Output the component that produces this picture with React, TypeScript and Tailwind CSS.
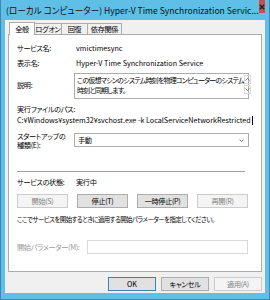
const btn =
  'h-[14px] flex items-center justify-center border border-[#adadad] bg-[#e1e1e1] text-black'
const btnOff =
  'h-[14px] flex items-center justify-center border border-[#cccccc] bg-[#f4f4f4] text-[#838383]'
const tab = 'h-[12px] bg-[#f0f0f0] border border-l-0 border-[#acacac] flex items-center justify-center'

function Chevron({ up }: { up?: boolean }) {
  return (
    <svg width="5" height="3" viewBox="0 0 5 3" className="block">
      <path d={up ? 'M0.5 2.5 L2.5 0.5 L4.5 2.5' : 'M0.5 0.5 L2.5 2.5 L4.5 0.5'} fill="none" stroke="#606060" strokeWidth="0.8" />
    </svg>
  )
}

export default function App() {
  return (
    <div className="w-[270px] h-[300px] bg-[#5fbfe7] border-x border-b border-[#3a88b4] flex flex-col font-['Noto_Sans_CJK_JP',sans-serif] [font-feature-settings:'palt'] text-black text-[7.2px] leading-[10px] tracking-[-0.35px]">
      {/* title bar */}
      <div className="h-[20px] flex items-start">
        <div className="pl-[5px] pt-[4px] text-[8.6px] leading-[12px] tracking-normal text-[#111] whitespace-nowrap">
          (ローカル コンピューター) Hyper-V Time Synchronization Servic...
        </div>
        <div className="ml-auto mr-[4px] w-[16px] h-[13px] bg-[#c7504c] flex items-center justify-center">
          <svg width="6" height="6" viewBox="0 0 6 6">
            <path d="M0.8 0.8 L5.2 5.2 M5.2 0.8 L0.8 5.2" stroke="#2a1a1a" strokeWidth="1.3" />
          </svg>
        </div>
      </div>

      {/* client */}
      <div className="mx-[4px] h-[273px] bg-[#f0f0f0] flex flex-col px-[3px] pt-[2px]">
        {/* tabs */}
        <div className="flex items-end h-[13px] ml-[1px] relative z-10">
          <div className="w-[26px] h-[13px] bg-white border border-b-0 border-[#acacac] flex items-center justify-center pb-[1px]">
            全般
          </div>
          <div className={`w-[27px] ${tab}`}>ログオン</div>
          <div className={`w-[26px] ${tab}`}>回復</div>
          <div className={`w-[34px] ${tab}`}>依存関係</div>
        </div>

        {/* panel */}
        <div className="-mt-px h-[238px] bg-white border border-[#acacac] flex flex-col pl-[8px]">
          <div className="mt-[7px] h-[12px] flex items-center">
            <span className="w-[59px]">サービス名:</span>
            <span className="tracking-normal">vmictimesync</span>
          </div>
          <div className="mt-[3px] h-[12px] flex items-center">
            <span className="w-[59px]">表示名:</span>
            <span className="tracking-normal">Hyper-V Time Synchronization Service</span>
          </div>
          <div className="mt-[4px] h-[26px] flex">
            <span className="w-[57px] pt-[7px]">説明:</span>
            <div className="w-[175px] h-[26px] border border-[#abadb3] flex">
              <div className="flex-1 pl-[2px] pt-[2px] leading-[9.5px] whitespace-nowrap text-[7px] tracking-[-0.8px]">
                この仮想マシンのシステム時刻を物理コンピューターのシステム
                <br />
                時刻と同期します。
              </div>
              <div className="w-[10px] flex flex-col gap-[1px] pt-[1px] pr-[1px]">
                <div className="h-[9px] border border-[#d9d9d9] flex items-center justify-center">
                  <Chevron up />
                </div>
                <div className="h-[9px] border border-[#d9d9d9] flex items-center justify-center">
                  <Chevron />
                </div>
              </div>
            </div>
          </div>
          <div className="mt-[5px] h-[10px] flex items-center">実行ファイルのパス:</div>
          <div className="mt-[1px] h-[10px] flex items-center whitespace-nowrap tracking-normal">
            C:¥Windows¥system32¥svchost.exe -k LocalServiceNetworkRestricted
            <span className="w-px h-[9px] bg-black ml-[1px]" />
          </div>
          <div className="mt-[8px] h-[18px] flex">
            <div className="w-[57px] leading-[9px] -mt-[1px] whitespace-nowrap">
              スタートアップの
              <br />
              種類(E):
            </div>
            <div className="w-[175px] h-[14px] border border-[#acacac] bg-white flex items-center pl-[3px] pr-[4px]">
              <span className="flex-1">手動</span>
              <Chevron />
            </div>
          </div>
          <div className="mt-[20px] w-[228px] h-px bg-[#a0a0a0]" />
          <div className="mt-[5px] h-[10px] flex items-center">
            <span className="w-[59px]">サービスの状態:</span>
            <span>実行中</span>
          </div>
          <div className="mt-[7px] w-[231px] grid grid-cols-4 gap-x-[9px]">
            <div className={btnOff}>開始(S)</div>
            <div className={btn}>停止(T)</div>
            <div className={btn}>一時停止(P)</div>
            <div className={btnOff}>再開(R)</div>
          </div>
          <div className="mt-[7px] h-[10px] flex items-center whitespace-nowrap text-[6.4px] tracking-[-0.5px]">
            ここでサービスを開始するときに適用する開始パラメーターを指定してください。
          </div>
          <div className="mt-[15px] h-[14px] flex items-center">
            <span className="w-[70px] text-[#9a9a9a] whitespace-nowrap">開始パラメーター(M):</span>
            <div className="w-[161px] h-[14px] border border-[#d9d9d9] bg-white" />
          </div>
        </div>

        {/* dialog buttons */}
        <div className="mt-[5px] flex justify-end gap-[5px]">
          <div className="w-[48px] h-[14px] flex items-center justify-center border border-[#3c7fb1] bg-[#e1e1e1] tracking-normal">
            OK
          </div>
          <div className={`w-[48px] ${btn}`}>キャンセル</div>
          <div className={`w-[48px] ${btnOff}`}>適用(A)</div>
        </div>
      </div>
    </div>
  )
}
